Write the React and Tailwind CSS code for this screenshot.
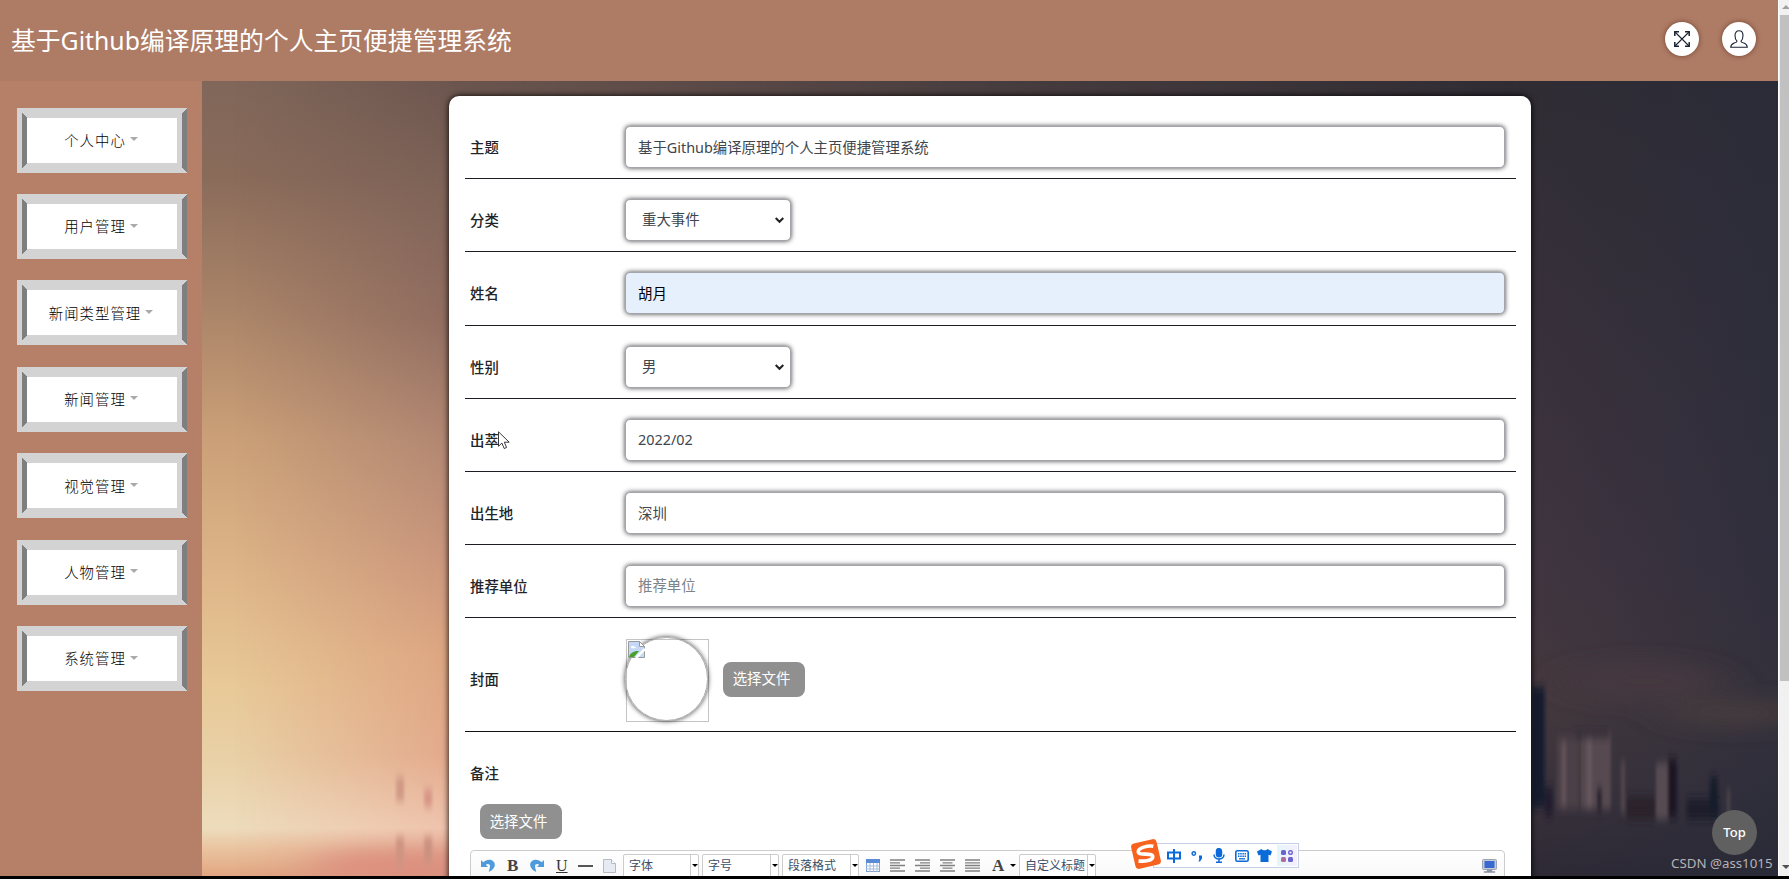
// src/App.jsx
import React from "react";

const menuItems = [
  "个人中心",
  "用户管理",
  "新闻类型管理",
  "新闻管理",
  "视觉管理",
  "人物管理",
  "系统管理",
];

const fields = [
  { label: "主题", type: "text", value: "基于Github编译原理的个人主页便捷管理系统" },
  { label: "分类", type: "select", value: "重大事件" },
  { label: "姓名", type: "text", value: "胡月", autofill: true },
  { label: "性别", type: "select", value: "男" },
  { label: "出萃", type: "text", value: "2022/02" },
  { label: "出生地", type: "text", value: "深圳" },
  { label: "推荐单位", type: "text", value: "", placeholder: "推荐单位" },
];

// Blurry sunset with the city on the right
const Backdrop = () => (
  <svg
    className="absolute inset-0 w-full h-full"
    viewBox="0 0 1575 795"
    preserveAspectRatio="none"
  >
    <defs>
      <linearGradient id="sunset" x1="0" y1="0" x2="0" y2="1">
        <stop offset="0" stopColor="#80675a" />
        <stop offset="0.12" stopColor="#8a6b5a" />
        <stop offset="0.28" stopColor="#a98368" />
        <stop offset="0.45" stopColor="#cba078" />
        <stop offset="0.62" stopColor="#deb588" />
        <stop offset="0.76" stopColor="#e8c997" />
        <stop offset="0.85" stopColor="#e9d0a6" />
        <stop offset="0.94" stopColor="#eddcbc" />
        <stop offset="0.965" stopColor="#eac4a0" />
        <stop offset="1" stopColor="#e2a681" />
      </linearGradient>
      <linearGradient id="rose" x1="0" y1="0" x2="0" y2="1">
        <stop offset="0" stopColor="#6c564f" />
        <stop offset="0.15" stopColor="#806459" />
        <stop offset="0.3" stopColor="#906c60" />
        <stop offset="0.45" stopColor="#b08672" />
        <stop offset="0.6" stopColor="#c9957c" />
        <stop offset="0.72" stopColor="#dca481" />
        <stop offset="0.85" stopColor="#e3a98c" />
        <stop offset="0.94" stopColor="#efc2ad" />
        <stop offset="0.97" stopColor="#e0a38f" />
        <stop offset="1" stopColor="#d48f81" />
      </linearGradient>
      <linearGradient id="dusk" x1="0" y1="0" x2="0" y2="1">
        <stop offset="0" stopColor="#2f2c34" />
        <stop offset="0.3" stopColor="#37303a" />
        <stop offset="0.6" stopColor="#3f3440" />
        <stop offset="0.78" stopColor="#44383d" />
        <stop offset="0.88" stopColor="#3b333c" />
        <stop offset="1" stopColor="#2d2935" />
      </linearGradient>
      <linearGradient id="toRose">
        <stop offset="0.02" stopColor="#000" />
        <stop offset="0.16" stopColor="#fff" />
      </linearGradient>
      <linearGradient id="toDusk">
        <stop offset="0.15" stopColor="#000" />
        <stop offset="0.5" stopColor="#999" />
        <stop offset="0.84" stopColor="#fff" />
      </linearGradient>
      <linearGradient id="night">
        <stop offset="0.85" stopColor="#272b3a" stopOpacity="0" />
        <stop offset="1" stopColor="#272b3a" stopOpacity="0.6" />
      </linearGradient>
      <mask id="roseMask">
        <rect width="1575" height="795" fill="url(#toRose)" />
      </mask>
      <mask id="duskMask">
        <rect width="1575" height="795" fill="url(#toDusk)" />
      </mask>
      <filter id="soft">
        <feGaussianBlur stdDeviation="1.8 4" />
      </filter>
      <filter id="wide" x="-50%" y="-200%" width="200%" height="500%">
        <feGaussianBlur stdDeviation="22 10" />
      </filter>
    </defs>
    <rect width="1575" height="795" fill="url(#sunset)" />
    <rect width="1575" height="795" fill="url(#rose)" mask="url(#roseMask)" />
    <rect width="1575" height="795" fill="url(#dusk)" mask="url(#duskMask)" />
    <rect width="1575" height="795" fill="url(#night)" />
    <g filter="url(#wide)">
      <ellipse cx="1530" cy="632" rx="70" ry="14" fill="#443b3d" />
      <ellipse cx="1440" cy="600" rx="80" ry="20" fill="#44383f" />
      <ellipse cx="190" cy="785" rx="80" ry="14" fill="#dd8f7e" />
    </g>
    <g filter="url(#soft)">
      <rect x="194" y="696" width="8" height="24" fill="#d09a86" />
      <rect x="222" y="708" width="8" height="18" fill="#d89686" />
      <rect x="194" y="756" width="8" height="30" fill="#cf9482" />
      <rect x="222" y="756" width="8" height="26" fill="#cc9280" />
      <rect x="1329" y="606" width="13" height="120" fill="#191d2f" />
      <rect x="1342" y="706" width="8" height="30" fill="#221f2d" />
      <rect x="1354" y="656" width="22" height="72" fill="#4c4046" />
      <rect x="1359" y="660" width="4" height="66" fill="#63535a" />
      <rect x="1378" y="652" width="30" height="76" fill="#564850" />
      <rect x="1384" y="658" width="5" height="70" fill="#66565d" />
      <rect x="1372" y="652" width="34" height="5" fill="#2f2a35" />
      <rect x="1394" y="706" width="5" height="26" fill="#2b2530" />
      <rect x="1418" y="680" width="4" height="52" fill="#52464c" />
      <rect x="1424" y="716" width="30" height="22" fill="#29222b" />
      <rect x="1453" y="682" width="12" height="56" fill="#574c52" />
      <rect x="1465" y="678" width="9" height="58" fill="#1b1721" />
      <rect x="1484" y="718" width="32" height="20" fill="#1b1c2b" />
      <rect x="1507" y="696" width="8" height="42" fill="#171a29" />
      <rect x="1524" y="708" width="3" height="28" fill="#4d454d" />
    </g>
  </svg>
);

const Header = () => (
  <header className="h-[81px] bg-[#ae7b65] flex items-center justify-between pl-[11px] pr-[22px] shrink-0">
    <h1 className="text-[24.800px] leading-none text-white">
      基于Github编译原理的个人主页便捷管理系统
    </h1>
    <div className="flex gap-[23px] pb-[3px]">
      <button className="w-[34px] h-[34px] rounded-full bg-white flex items-center justify-center shadow-[0_0_5px_rgba(70,30,10,0.6)]">
        <svg className="w-4 h-4" viewBox="0 0 16 16" fill="none" stroke="#1b2333">
          <path d="M1 1l14 14M15 1L1 15" strokeWidth="1.1" />
          <path d="M.8 5V.8H5M11 .8h4.200V5M15.200 11v4.200H11M5 15.200H.8V11" strokeWidth="1.500" />
        </svg>
      </button>
      <button className="w-[34px] h-[34px] rounded-full bg-white flex items-center justify-center shadow-[0_0_5px_rgba(70,30,10,0.6)]">
        <svg className="w-[18px] h-[18px]" viewBox="0 0 18 18" fill="none" stroke="#1b2333" strokeWidth="1.100">
          <path d="M7 11.200C5.700 10 5 8 5 5.600 5 2.500 6.500.8 9 .8s4 1.700 4 4.800c0 2.400-.7 4.400-2 5.600 0 1 1 1.300 2.900 1.900 2 .6 3.100 1.600 3.400 4.100H.7c.3-2.500 1.400-3.500 3.400-4.100 1.900-.6 2.900-.9 2.900-1.900z" />
        </svg>
      </button>
    </div>
  </header>
);

const Sidebar = () => (
  <nav className="w-[202px] bg-[#b58067] pt-[26.600px] pl-[17px] flex flex-col gap-[21.450px] shrink-0">
    {menuItems.map((item) => (
      <a
        key={item}
        className="w-[170px] h-[65px] shrink-0 bg-white border-[10px] border-[#d3d3d3] [border-style:solid_ridge] flex items-center justify-center pr-[2px] pt-[1px] text-[14.400px] tracking-[1px] font-light text-black"
      >
        {item}
        <span className="ml-[4px] mb-[3px] border-x-4 border-t-4 border-x-transparent border-t-[#aaa]" />
      </a>
    ))}
  </nav>
);

const controlBase =
  "h-[42px] rounded-[5px] border border-[#a3a5aa] shadow-[0_0_5px_rgba(0,0,0,0.75)] text-[14.400px] text-[#40464c] outline-none";

const Field = ({ field }) => (
  <div className="h-[73.200px] pt-[20px] pl-[5px] flex items-start border-b border-[#1c1c22]">
    <label className="w-[155px] pt-[1px] leading-[42px] font-medium">{field.label}</label>
    {field.type === "select" ? (
      <div className="relative">
        <select className={`${controlBase} w-[166px] bg-white pl-[16px] appearance-none`}>
          <option>{field.value}</option>
        </select>
        <svg
          className="absolute right-[7px] top-[18px] w-[9px] h-[7px]"
          viewBox="0 0 9 7"
          fill="none"
          stroke="#222"
          strokeWidth="2"
        >
          <path d="M.7 1l3.800 3.800L8.300 1" />
        </svg>
      </div>
    ) : (
      <input
        className={`${controlBase} w-[880px] px-[12px] pb-[1px] placeholder:text-[#7b838b] ${
          field.autofill ? "bg-[#e6effc] text-black" : "bg-white"
        }`}
        defaultValue={field.value}
        placeholder={field.placeholder}
      />
    )}
  </div>
);

const FileButton = () => (
  <button className="w-[82px] h-[35px] rounded-lg bg-[#909090] text-white text-[14.400px] pr-[5px]">
    选择文件
  </button>
);

const BrokenImage = () => (
  <svg className="absolute left-[1px] top-[1px] w-[17px] h-[17px]" viewBox="0 0 17 17">
    <path d="M.5.500h11l5 5v11H.5z" fill="#c5d8f7" stroke="#9a9a9a" />
    <path d="M11.500.500v5h5z" fill="#fff" stroke="#9a9a9a" />
    <path d="M3 6.500c0-2 2.500-2 3-1 1.500-.5 2.500 1 1.500 1.800H3.500z" fill="#fff" />
    <path d="M1 16c1-4 5-6.500 10-6l-5 6z" fill="#46a12c" />
    <path d="M8 17l9-9" stroke="#fff" strokeWidth="2.500" />
  </svg>
);

const Combo = ({ text, width }) => (
  <div className={`${width} h-[24px] flex border border-[#ccc] rounded-[2px] bg-white text-[#3d4e66] text-[12px] leading-[22px]`}>
    <span className="flex-1 pl-[5px] overflow-hidden whitespace-nowrap">{text}</span>
    <span className="w-[8px] border-l border-[#ccc] flex items-center justify-center">
      <span className="border-x-[3px] border-t-[3px] border-x-transparent border-t-black" />
    </span>
  </div>
);

const Lines = ({ d }) => (
  <svg className="w-[15px] h-[13px]" viewBox="0 0 15 13" stroke="#808080" strokeWidth="1.300">
    <path d={d} />
  </svg>
);

const EditorToolbar = () => (
  <div className="ml-[5px] w-[1035px] h-[60px] mt-[11px] pt-[3px] border border-[#ccc] rounded-[4px] bg-gradient-to-b from-white to-[#f0f0f0] flex items-start justify-between">
    <div className="flex items-center h-[24px]">
      <svg className="ml-[10px] w-[14px] h-[13px]" viewBox="0 0 14 13">
        <path d="M0 1v7h7L4.800 5.800C6.500 4.300 9 4.800 9 7c0 2-1 4-1.200 6C11 11.500 14 9 13.800 5.500 13.500 0 6-1 2.300 3.300z" fill="#4d9bdc" />
      </svg>
      <b className="ml-[12px] w-[12px] font-['Liberation_Serif'] text-[17px] text-[#444]">B</b>
      <svg className="ml-[11px] mr-[1px] w-[14px] h-[13px] -scale-x-100" viewBox="0 0 14 13">
        <path d="M0 1v7h7L4.800 5.800C6.500 4.300 9 4.800 9 7c0 2-1 4-1.200 6C11 11.500 14 9 13.800 5.500 13.500 0 6-1 2.300 3.300z" fill="#4d9bdc" />
      </svg>
      <span className="ml-[11px] w-[12px] font-['Liberation_Serif'] text-[16px] text-[#333] underline">U</span>
      <span className="ml-[10px] w-[15px] h-[1.500px] bg-[#555]" />
      <svg className="ml-[10px] w-[13px] h-[14px]" viewBox="0 0 13 14">
        <path d="M.5.500h8l4 4v9H.5z" fill="#e6eaf2" stroke="#b5bac3" />
        <path d="M8.500.500v4h4" fill="#fff" stroke="#b5bac3" />
      </svg>
      <div className="ml-[7px] flex gap-[3px]">
        <Combo text="字体" width="w-[76px]" />
        <Combo text="字号" width="w-[77px]" />
        <Combo text="段落格式" width="w-[77px]" />
      </div>
      <svg className="ml-[7px] w-[14px] h-[13px]" viewBox="0 0 14 13">
        <rect x=".5" y=".5" width="13" height="12" fill="#fff" stroke="#7d9fd0" />
        <rect width="14" height="4" fill="#5c8bd6" />
        <path d="M0 7h14M0 10h14M4 4v9M7.500 4v9M11 4v9" stroke="#a5bcdf" />
      </svg>
      <div className="ml-[10px] flex gap-[10px]">
        <Lines d="M0 1h15M0 3.800h10M0 6.500h15M0 9.200h10M0 12h15" />
        <Lines d="M0 1h15M5 3.800h10M0 6.500h15M5 9.200h10M0 12h15" />
        <Lines d="M0 1h15M2.500 3.800h10M0 6.500h15M2.500 9.200h10M0 12h15" />
        <Lines d="M0 1h15M0 3.800h15M0 6.500h15M0 9.200h15M0 12h15" />
      </div>
      <b className="ml-[12px] w-[12px] font-['Liberation_Serif'] text-[17px] text-[#444]">A</b>
      <span className="ml-[6px] mr-[3px] border-x-[3px] border-t-[3px] border-x-transparent border-t-black" />
      <Combo text="自定义标题" width="w-[77px]" />
    </div>
    <svg className="mr-[7px] mt-[5px] w-[15px] h-[14px]" viewBox="0 0 15 14">
      <rect x=".5" y=".5" width="14" height="10" rx="1" fill="#c3cbd8" stroke="#9aa4b5" />
      <rect x="2.500" y="2" width="10" height="7" fill="#3968d0" />
      <path d="M5 11h5v1.500H2v1h11v-1H5z" fill="#8a93a5" stroke="#8a93a5" strokeWidth=".5" />
    </svg>
  </div>
);

const InputMethodBar = () => (
  <div className="absolute left-[1131px] top-[839px] flex items-center">
    <svg className="w-[30px] h-[30px] z-10" viewBox="0 0 30 30">
      <rect x="2" y="2" width="26" height="26" rx="3.500" fill="#f8621f" transform="rotate(-13 15 15)" />
      <path
        d="M23 8C18 6.500 7.500 8 7.500 12.200c0 4.300 14 1.500 14 6 0 4-9 4.300-14.500 3"
        fill="none"
        stroke="#fff"
        strokeWidth="3.600"
        transform="rotate(-5 15 15)"
      />
    </svg>
    <div className="-ml-[8px] w-[146px] h-[25px] pl-[13px] mt-[3px] bg-white border border-[#c3d0e8] flex items-center text-[#0b6bd8]">
      <svg className="w-[14px] h-[14px]" viewBox="0 0 14 14" fill="none" stroke="currentColor" strokeWidth="2">
        <path d="M1 3.500h12v6H1zM7 0v14" />
      </svg>
      <svg className="ml-[10px] w-[12px] h-[12px]" viewBox="0 0 12 12" fill="currentColor">
        <circle cx="2.800" cy="3.500" r="1.700" fill="none" stroke="currentColor" strokeWidth="1.500" />
        <path d="M8 5.500h3v3L9 11.500H7.500l1-3H8z" />
      </svg>
      <svg className="ml-[10px] w-[12px] h-[15px]" viewBox="0 0 12 15" fill="none" stroke="currentColor" strokeWidth="1.500">
        <rect x="3.500" y=".7" width="5" height="8" rx="2.500" fill="currentColor" />
        <path d="M1 6.500c0 6 10 6 10 0M6 11v3M3 14.200h6" />
      </svg>
      <svg className="ml-[10px] w-[14px] h-[12px]" viewBox="0 0 14 12" fill="none" stroke="currentColor" strokeWidth="1.600">
        <rect x=".8" y=".8" width="12.400" height="10.400" rx="1.500" />
        <path d="M3 3.800h8M3 6.200h8" strokeDasharray="1.500 .7" />
        <path d="M4 8.800h6" strokeWidth="1.300" />
      </svg>
      <svg className="ml-[8px] w-[15px] h-[13px]" viewBox="0 0 15 13" fill="currentColor">
        <path d="M4.500 0c1 1.700 5 1.700 6 0L15 2.500l-1.500 4-2-.7V13h-8V5.800l-2 .7L0 2.500z" />
      </svg>
      <span className="ml-[5px] w-[20px] h-[21px] flex items-center justify-center bg-gradient-to-r from-[#e3f6fb] to-[#f6effc]">
        <svg className="w-[12px] h-[12px]" viewBox="0 0 12 12">
          <rect width="5" height="5" rx="1.500" fill="#6b62cf" />
          <rect x="7.700" y=".7" width="3.600" height="3.600" rx="1.500" fill="none" stroke="#6b62cf" strokeWidth="1.400" />
          <rect y="7" width="5" height="5" rx="1.500" fill="#b06a9c" />
          <rect x="7" y="7" width="5" height="5" rx="1.500" fill="#6b62cf" />
        </svg>
      </span>
    </div>
  </div>
);

const Scrollbar = () => (
  <div className="w-[11px] bg-[#f1f1f1] border-l border-white pl-[1px] flex flex-col justify-between items-stretch overflow-hidden shrink-0">
    <div>
      <div className="h-[15px] pl-[2px] pt-[5px] overflow-hidden">
        <span className="block w-0 border-x-4 border-b-4 border-x-transparent border-b-[#a0a0a0]" />
      </div>
      <div className="h-[666px] bg-[#c1c1c1]" />
    </div>
    <div className="h-[11px] pl-[2px]">
      <span className="block w-0 border-x-4 border-t-4 border-x-transparent border-t-[#505050]" />
    </div>
  </div>
);

const App = () => {
  return (
    <div
      className="relative w-[1789px] h-[879px] overflow-hidden bg-black text-[14.400px] text-[#212529]"
      style={{ fontFamily: '"Noto Sans", "Noto Sans CJK SC", sans-serif' }}
    >
      <div className="flex h-[876px]">
        <div className="w-[1778px] flex flex-col">
          <Header />
          <div className="flex flex-1 min-h-0">
            <Sidebar />
            <main className="relative flex-1 overflow-hidden">
              <Backdrop />
              <section className="relative ml-[247px] mt-[15px] w-[1082px] h-[800px] rounded-[10px] bg-white shadow-[0_0_6px_#000] pt-[10px] pl-[16px]">
                <div className="w-[1051px]">
                  {fields.map((field) => (
                    <Field key={field.label} field={field} />
                  ))}
                  <div className="h-[113.600px] pl-[5px] flex items-center border-b border-[#111]">
                    <span className="w-[155px] pt-[10px] font-medium">封面</span>
                    <div className="relative w-[83px] h-[83px] mt-[11px] ml-[1px] border border-[#c4c4c4]">
                      <div className="-ml-[2px] -mt-[3px] w-[83px] h-[84px] rounded-full shadow-[0_0_5px_rgba(0,0,0,0.8)] border border-[#aaa]" />
                      <BrokenImage />
                    </div>
                    <div className="ml-[14px] mt-[9px]">
                      <FileButton />
                    </div>
                  </div>
                  <div className="pt-[31px] pl-[5px] font-medium leading-[22px]">备注</div>
                  <div className="pt-[19px] pl-[15px] flex">
                    <FileButton />
                  </div>
                  <EditorToolbar />
                </div>
              </section>
            </main>
          </div>
        </div>
        <Scrollbar />
      </div>

      <InputMethodBar />

      <svg className="absolute left-[498px] top-[431px] w-[13px] h-[19px]" viewBox="0 0 13 19">
        <path d="M.5.800v14.500l3.400-3.200 2.300 5.400 2.400-1-2.300-5.300h4.900z" fill="#fff" stroke="#222" strokeWidth=".9" />
      </svg>

      <button className="absolute left-[1712px] top-[810px] w-[45px] h-[45px] rounded-full bg-[#606060] text-white text-[13px] font-medium">
        Top
      </button>
      <span className="absolute left-[1671px] top-[854px] text-[13.300px] leading-[18px] whitespace-nowrap text-[#b5b3b8]">
        CSDN @ass1015
      </span>
    </div>
  );
};

export default App;
